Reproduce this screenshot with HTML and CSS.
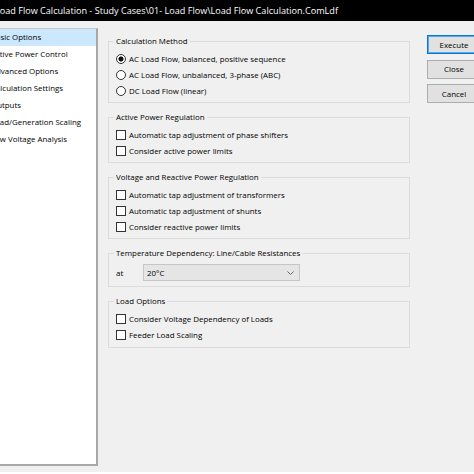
FILE: index.html
```html
<!DOCTYPE html>
<html>
<head>
<meta charset="utf-8">
<link rel="stylesheet" href="styles.css">
</head>
<body>
<div class="window">
  <div class="titlebar"><span class="title">Load Flow Calculation - Study Cases\01- Load Flow\Load Flow Calculation.ComLdf</span></div>
  <div class="main">
    <ul class="tree">
      <li class="sel">Basic Options</li>
      <li>Active Power Control</li>
      <li>Advanced Options</li>
      <li>Calculation Settings</li>
      <li>Outputs</li>
      <li>Load/Generation Scaling</li>
      <li>Low Voltage Analysis</li>
    </ul>
    <div class="content">
      <fieldset class="group">
        <legend>Calculation Method</legend>
        <div class="opt"><span class="radio on"></span>AC Load Flow, balanced, positive sequence</div>
        <div class="opt"><span class="radio"></span>AC Load Flow, unbalanced, 3-phase (ABC)</div>
        <div class="opt"><span class="radio"></span>DC Load Flow (linear)</div>
      </fieldset>
      <fieldset class="group">
        <legend>Active Power Regulation</legend>
        <div class="opt"><span class="check"></span>Automatic tap adjustment of phase shifters</div>
        <div class="opt"><span class="check"></span>Consider active power limits</div>
      </fieldset>
      <fieldset class="group">
        <legend>Voltage and Reactive Power Regulation</legend>
        <div class="opt"><span class="check"></span>Automatic tap adjustment of transformers</div>
        <div class="opt"><span class="check"></span>Automatic tap adjustment of shunts</div>
        <div class="opt"><span class="check"></span>Consider reactive power limits</div>
      </fieldset>
      <fieldset class="group group-temp">
        <legend>Temperature Dependency: Line/Cable Resistances</legend>
        <div class="temp-row">
          <span class="at">at</span>
          <div class="select"><span>20°C</span>
            <svg class="chev" width="7" height="4" viewBox="0 0 7 4"><polyline points="0.5,0.5 3.5,3.5 6.5,0.5" fill="none" stroke="#666" stroke-width="1"/></svg>
          </div>
        </div>
      </fieldset>
      <fieldset class="group group-load">
        <legend>Load Options</legend>
        <div class="opt"><span class="check"></span>Consider Voltage Dependency of Loads</div>
        <div class="opt"><span class="check"></span>Feeder Load Scaling</div>
      </fieldset>
    </div>
    <div class="buttons">
      <button class="btn default">Execute</button>
      <button class="btn">Close</button>
      <button class="btn">Cancel</button>
    </div>
  </div>
</div>
</body>
</html>
```

FILE: styles.css
```css
html, body {
  margin: 0;
  padding: 0;
  background: #ffffff;
  overflow: hidden;
}
body {
  font-family: "Open Sans", "Noto Sans", sans-serif;
  font-size: 7.9px;
  color: #000;
}
.window {
  width: 474px;
  height: 472px;
  background: #f0f0f0;
  overflow: hidden;
}
.titlebar {
  height: 21px;
  line-height: 21px;
  background: #000;
  color: #fff;
  font-size: 9.1px;
  white-space: nowrap;
  overflow: hidden;
}
.title {
  display: inline-block;
  margin-left: -5px;
}
.main {
  display: flex;
  align-items: flex-start;
  padding-top: 7px;
}
.tree {
  flex-shrink: 0;
  list-style: none;
  margin: 0;
  padding: 0;
  width: 96px;
  height: 435px;
  background: #fff;
  border-top: 1px solid #c8c8c8;
  border-right: 2px solid #a8a8a8;
  border-bottom: 2px solid #a8a8a8;
  overflow: hidden;
}
.tree li {
  height: 17px;
  line-height: 17px;
  white-space: nowrap;
  text-indent: -9px;
}
.tree li.sel {
  background: #cce8ff;
}
.content {
  flex-shrink: 0;
  width: 302px;
  margin-left: 10px;
  margin-top: 7px;
}
.group {
  box-sizing: border-box;
  width: 100%;
  min-width: 0;
  margin: 0 0 8px 0;
  padding: 4px 0 3px 7px;
  border: 1px solid #dcdcdc;
}
.group legend {
  padding: 0 2px;
  margin-left: -2px;
  height: 12px;
  line-height: 12px;
  color: #000;
}
.opt {
  display: flex;
  align-items: center;
  height: 16px;
  white-space: nowrap;
}
.radio {
  flex-shrink: 0;
  box-sizing: border-box;
  width: 10px;
  height: 10px;
  margin-right: 3px;
  border: 1px solid #333;
  border-radius: 50%;
  background: #fff;
}
.radio.on {
  background: radial-gradient(circle, #111 0, #111 2.2px, #fff 2.9px);
}
.check {
  flex-shrink: 0;
  box-sizing: border-box;
  width: 10px;
  height: 10px;
  margin-right: 3px;
  border: 1px solid #333;
  background: #fff;
}
.group-temp {
  padding-top: 5px;
  padding-bottom: 5px;
}
.group-load {
  padding-bottom: 4px;
}
.temp-row {
  display: flex;
  align-items: center;
  height: 17px;
}
.at {
  width: 27px;
  flex-shrink: 0;
}
.select {
  box-sizing: border-box;
  width: 157px;
  height: 17px;
  display: flex;
  align-items: center;
  justify-content: space-between;
  padding: 0 5px 0 3px;
  background: #e5e5e5;
  border: 1px solid #c6c6c6;
}
.chev {
  display: block;
}
.buttons {
  flex-shrink: 0;
  display: flex;
  flex-direction: column;
  gap: 5.5px;
  margin-left: 17px;
  margin-top: 7px;
}
.btn {
  box-sizing: border-box;
  width: 54px;
  height: 19px;
  padding: 0;
  margin: 0;
  font: inherit;
  color: #000;
  background: #e1e1e1;
  border: 1px solid #adadad;
  text-align: center;
}
.btn.default {
  border: 1px solid #0078d7;
  box-shadow: inset 0 0 0 1px #5ea7e6;
}
```
